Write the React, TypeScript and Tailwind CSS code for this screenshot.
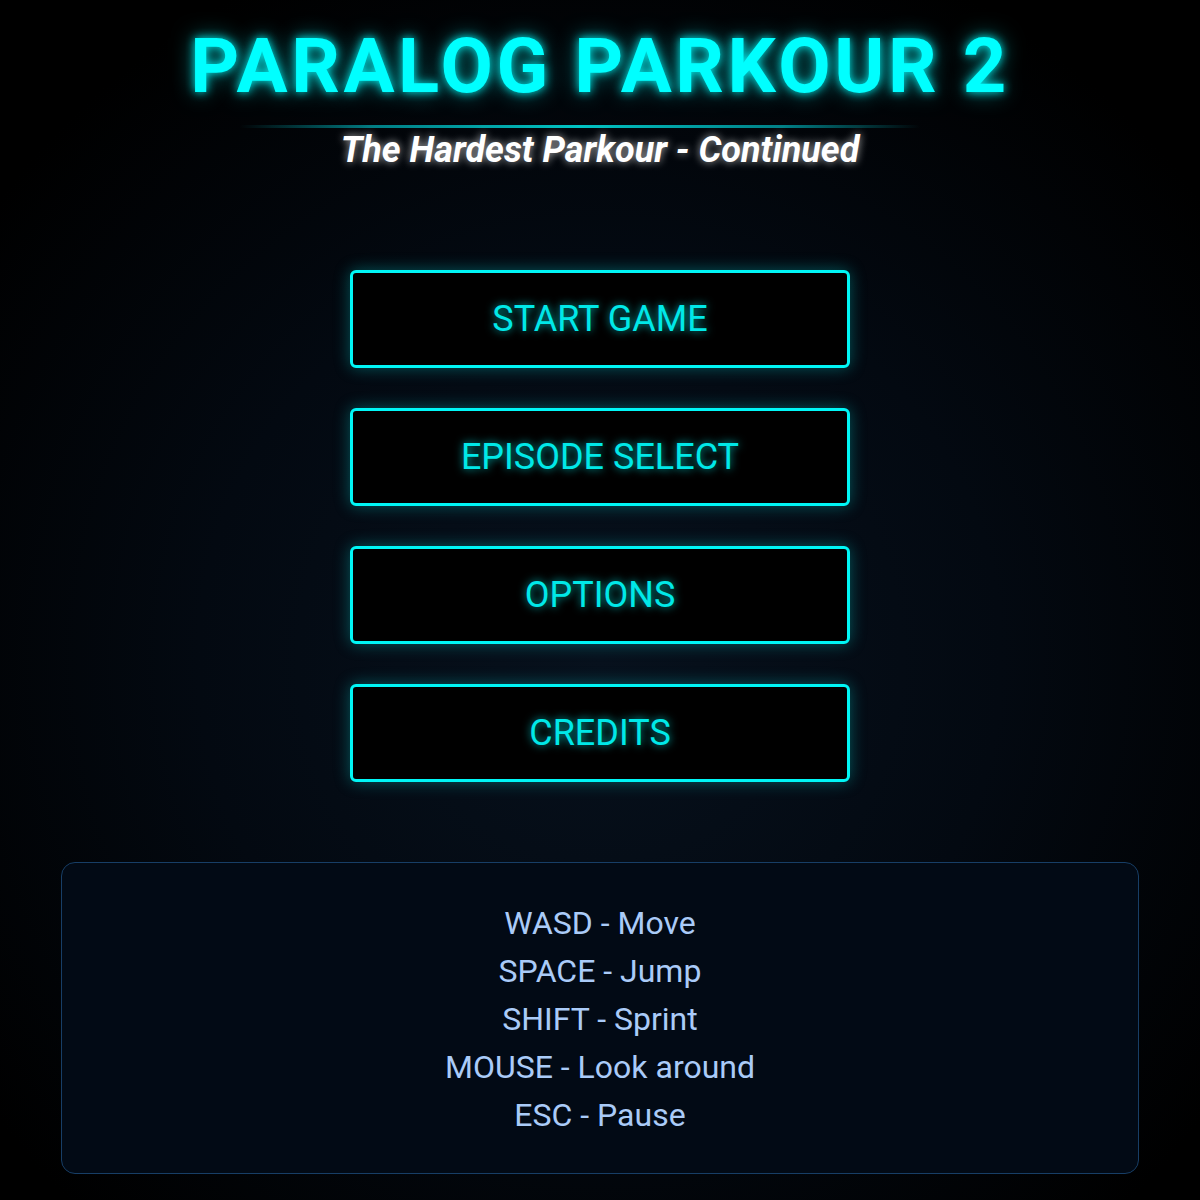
import React from "react";

const menuItems = ["START GAME", "EPISODE SELECT", "OPTIONS", "CREDITS"];

const controls = [
  "WASD - Move",
  "SPACE - Jump",
  "SHIFT - Sprint",
  "MOUSE - Look around",
  "ESC - Pause",
];

function MenuButton({ label }: { label: string }) {
  return (
    <button
      className="w-[500px] h-[98px] flex items-center justify-center bg-black border-[3px] border-[#00f6f6] rounded-[6px] shadow-[0_0_16px_rgba(0,230,230,0.35)] text-[#00e8e8] text-[36px] [text-shadow:0_0_8px_rgba(0,255,255,0.7)]"
      style={{ fontFamily: "Roboto, 'Liberation Sans', sans-serif" }}
    >
      {label}
    </button>
  );
}

export default function App() {
  return (
    <div
      className="w-[1200px] h-[1200px] overflow-hidden flex flex-col items-center bg-[radial-gradient(circle_at_50%_55%,#07111d_0%,#030911_45%,#000000_85%)]"
      style={{ fontFamily: "Roboto, 'Liberation Sans', sans-serif" }}
    >
      {/* Titel */}
      <h1 className="mt-[28px] text-[76px] leading-none font-bold tracking-[0.047em] text-[#00ffff] [text-shadow:0_0_10px_rgba(0,255,255,0.9),0_0_22px_rgba(0,255,255,0.5)]">
        PARALOG PARKOUR 2
      </h1>
      <div className="mt-[21px] mr-[40px] w-[680px] h-[3px] bg-[linear-gradient(90deg,transparent_0%,#007f86_20%,#00c4c4_50%,#007f86_80%,transparent_100%)]" />
      <p className="mt-[4px] text-[36px] leading-none font-bold italic text-white [text-shadow:0_0_8px_rgba(255,255,255,0.7)]">
        The Hardest Parkour - Continued
      </p>

      {/* Menü */}
      <div className="mt-[102px] flex flex-col gap-[40px]">
        {menuItems.map((item) => (
          <MenuButton key={item} label={item} />
        ))}
      </div>

      {/* Steuerung */}
      <div className="mt-[80px] w-[1078px] pt-[36px] pb-[34px] border border-[#173e66] rounded-[14px] bg-[#020a15] flex flex-col items-center">
        {controls.map((c) => (
          <div key={c} className="text-[32px] leading-[48px] text-[#aacbf8]">
            {c}
          </div>
        ))}
      </div>
    </div>
  );
}
